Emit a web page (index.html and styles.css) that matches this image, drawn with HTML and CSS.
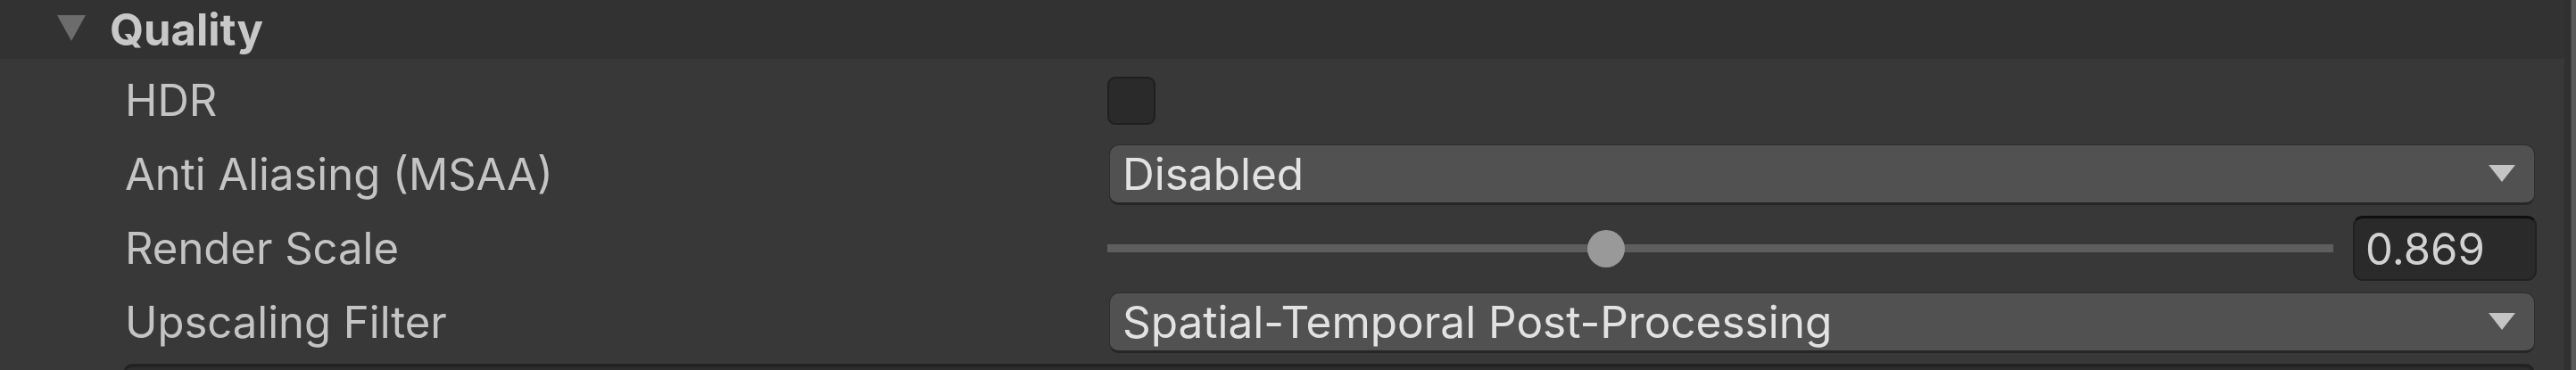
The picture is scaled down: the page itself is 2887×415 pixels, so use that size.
FILE: index.html
```html
<!DOCTYPE html>
<html lang="en">
<head>
<meta charset="utf-8">
<title>Quality</title>
<link rel="stylesheet" href="styles.css">
</head>
<body>
<div class="inspector">
  <div class="main">
    <div class="foldout-header">
      <span class="fold-arrow"></span>
      <span class="foldout-title">Quality</span>
    </div>
    <div class="content">
      <div class="row">
        <div class="label">HDR</div>
        <div class="field">
          <span class="checkbox"></span>
        </div>
      </div>
      <div class="row">
        <div class="label">Anti Aliasing (MSAA)</div>
        <div class="field">
          <div class="popup"><span class="popup-text">Disabled</span><span class="popup-arrow"></span></div>
        </div>
      </div>
      <div class="row">
        <div class="label">Render Scale</div>
        <div class="field slider-field">
          <div class="slider">
            <div class="track"></div>
            <div class="thumb" style="left: 40.7%;"></div>
          </div>
          <div class="number">0.869</div>
        </div>
      </div>
      <div class="row">
        <div class="label">Upscaling Filter</div>
        <div class="field">
          <div class="popup"><span class="popup-text">Spatial-Temporal Post-Processing</span><span class="popup-arrow"></span></div>
        </div>
      </div>
      <div class="next-box"></div>
    </div>
  </div>
  <div class="gutter"></div>
  <div class="scrollbar"></div>
</div>
</body>
</html>
```

FILE: styles.css
```css
html, body {
  margin: 0;
  padding: 0;
}
body {
  width: 2887px;
  height: 415px;
  overflow: hidden;
  background: #383838;
  font-family: Inter, "Noto Sans", "Liberation Sans", sans-serif;
  color: #c4c4c4;
}
.inspector {
  display: flex;
  height: 415px;
  overflow: hidden;
}
.main {
  flex: 1;
  display: flex;
  flex-direction: column;
  min-width: 0;
  overflow: hidden;
}
.gutter {
  flex: none;
  width: 7px;
  background: #303030;
}
.scrollbar {
  flex: none;
  width: 5px;
  background: #5a5a5a;
  border-left: 1px solid #4a4a4a;
}
.foldout-header {
  flex: none;
  height: 66px;
  background: #323232;
  display: flex;
  align-items: center;
  padding-left: 64px;
  box-sizing: border-box;
}
.fold-arrow {
  width: 0;
  height: 0;
  border-left: 16px solid transparent;
  border-right: 16px solid transparent;
  border-top: 29px solid #6c6c6c;
  margin-right: 27px;
  margin-top: -4px;
}
.foldout-title {
  font-size: 49px;
  font-weight: 700;
  color: #c8c8c8;
  line-height: 1;
}
.content {
  flex: none;
  padding-top: 5px;
  display: flex;
  flex-direction: column;
}
.row {
  flex: none;
  height: 83px;
  display: flex;
  align-items: center;
  padding-left: 140px;
  padding-right: 33px;
}
.label {
  width: 1101px;
  flex: none;
  font-size: 49px;
  color: #c4c4c4;
  white-space: nowrap;
}
.field {
  flex: 1;
  display: flex;
  align-items: center;
  min-width: 0;
}
.checkbox {
  width: 54px;
  height: 54px;
  box-sizing: border-box;
  background: #2a2a2a;
  border: 2px solid #202020;
  border-radius: 9px;
}
.popup {
  flex: 1;
  height: 68px;
  box-sizing: border-box;
  margin-left: 2px;
  background: #515151;
  border: 1px solid #2e2e2e;
  border-bottom: 3px solid #262626;
  border-radius: 11px;
  display: flex;
  align-items: center;
  padding-left: 14px;
  padding-right: 21px;
}
.popup-text {
  flex: 1;
  font-size: 49.5px;
  color: #e2e2e2;
  white-space: nowrap;
}
.popup-arrow {
  width: 0;
  height: 0;
  border-left: 15px solid transparent;
  border-right: 15px solid transparent;
  border-top: 19px solid #c4c4c4;
}
.slider-field {
  gap: 22px;
}
.slider {
  flex: 1;
  position: relative;
  height: 44px;
  display: flex;
  align-items: center;
}
.track {
  flex: 1;
  height: 9px;
  background: #5e5e5e;
}
.thumb {
  position: absolute;
  top: 1px;
  width: 42px;
  height: 42px;
  margin-left: -21px;
  border-radius: 50%;
  background: #999999;
}
.number {
  width: 206px;
  height: 73px;
  box-sizing: border-box;
  background: #2a2a2a;
  border: 2px solid #212121;
  border-top: 3px solid #0f0f0f;
  border-radius: 11px;
  font-size: 49px;
  color: #d2d2d2;
  display: flex;
  align-items: center;
  padding-left: 12px;
  margin-right: -2px;
}
.next-box {
  flex: none;
  margin-top: 5px;
  margin-left: 138px;
  margin-right: 33px;
  height: 20px;
  background: #2d2d2d;
  border-top: 4px solid #222222;
  border-left: 2px solid #222222;
  border-right: 2px solid #222222;
  border-radius: 11px 11px 0 0;
}
```
